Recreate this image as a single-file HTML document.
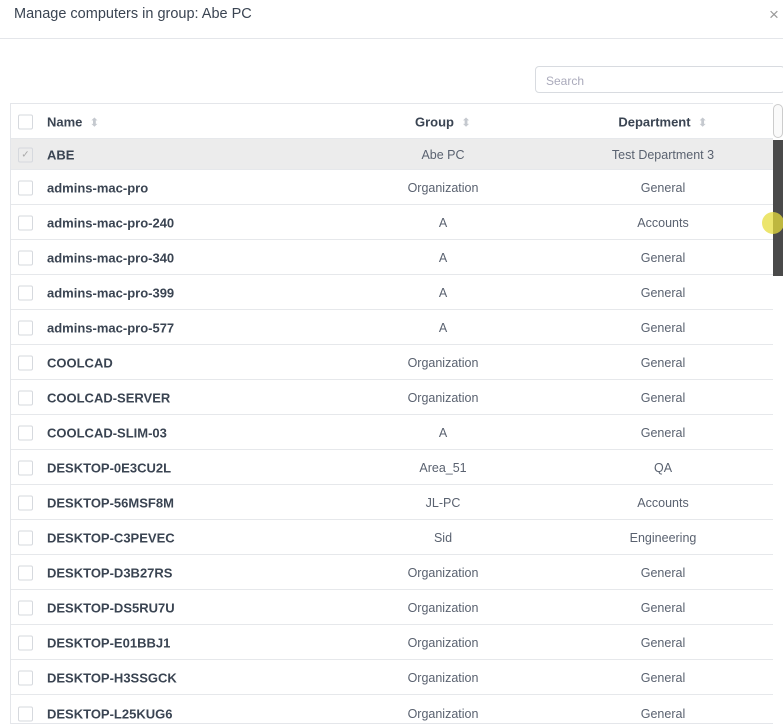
<!DOCTYPE html>
<html><head><meta charset="utf-8"><style>
body{margin:0;width:783px;height:728px;overflow:hidden;background:#fff;font-family:"Liberation Sans",sans-serif;color:#3a4452;position:relative}
.title{position:absolute;left:14px;top:6px;font-size:14.5px;color:#3a4452}
.x{position:absolute;left:769px;top:5px;font-size:17px;color:#999}
.hr{position:absolute;left:0;top:38px;width:783px;height:1px;background:#e4e6ea}
.search{position:absolute;left:535px;top:66px;width:250px;height:27px;border:1px solid #d8dbe0;border-radius:4px;box-sizing:border-box;font-size:12px;color:#aab;padding:7px 10px}
.tbl{position:absolute;left:10px;top:103px;width:763px;height:621px;border:1px solid #e4e6ea;border-right:none;overflow:hidden;box-sizing:border-box}
.row{position:relative;height:35px;border-bottom:1px solid #e6e8eb;box-sizing:border-box;font-size:13px}
.row span{position:absolute;top:calc(50% + 1px);transform:translateY(-50%)}
.cb{left:7px;width:15px;height:15px;border:1px solid #d6d9de;border-radius:2px;box-sizing:border-box}
.n{left:36px;font-weight:bold;color:#3a4452}
.g{left:432px;transform:translate(-50%,-50%)!important;color:#5a6270;font-size:12.5px}
.d{left:652px;transform:translate(-50%,-50%)!important;color:#5a6270;font-size:12.5px}
.hd{font-weight:bold;font-size:13px}
.s{color:#c5c9cf;font-size:12px;margin-left:7px;font-weight:normal}
.sb1{position:absolute;left:773px;top:104px;width:10px;height:34px;border:1px solid #ccc;border-radius:5px;box-sizing:border-box;background:#fafafa}
.sb2{position:absolute;left:773px;top:140px;width:10px;height:136px;background:#4a4a4a}
.cur{position:absolute;left:762px;top:212px;width:22px;height:22px;border-radius:50%;background:rgba(230,220,60,.75)}
</style></head><body>
<div class="title">Manage computers in group: Abe PC</div>
<div class="x">×</div>
<div class="hr"></div>
<div class="search">Search</div>
<div class="tbl">
<div class="row" style="height:35px"><span class="cb"></span><span class="n hd">Name<b class="s">⬍</b></span><span class="g hd" style="color:#3a4452;font-size:13px">Group<b class="s">⬍</b></span><span class="d hd" style="color:#3a4452;font-size:13px">Department<b class="s">⬍</b></span></div>
<div class="row" style="height:31px;background:#ececec"><span class="cb" style="font-size:10px;color:#aaa;text-align:center;line-height:13px">✓</span><span class="n">ABE</span><span class="g">Abe PC</span><span class="d">Test Department 3</span></div>
<div class="row"><span class="cb"></span><span class="n">admins-mac-pro</span><span class="g">Organization</span><span class="d">General</span></div>
<div class="row"><span class="cb"></span><span class="n">admins-mac-pro-240</span><span class="g">A</span><span class="d">Accounts</span></div>
<div class="row"><span class="cb"></span><span class="n">admins-mac-pro-340</span><span class="g">A</span><span class="d">General</span></div>
<div class="row"><span class="cb"></span><span class="n">admins-mac-pro-399</span><span class="g">A</span><span class="d">General</span></div>
<div class="row"><span class="cb"></span><span class="n">admins-mac-pro-577</span><span class="g">A</span><span class="d">General</span></div>
<div class="row"><span class="cb"></span><span class="n">COOLCAD</span><span class="g">Organization</span><span class="d">General</span></div>
<div class="row"><span class="cb"></span><span class="n">COOLCAD-SERVER</span><span class="g">Organization</span><span class="d">General</span></div>
<div class="row"><span class="cb"></span><span class="n">COOLCAD-SLIM-03</span><span class="g">A</span><span class="d">General</span></div>
<div class="row"><span class="cb"></span><span class="n">DESKTOP-0E3CU2L</span><span class="g">Area_51</span><span class="d">QA</span></div>
<div class="row"><span class="cb"></span><span class="n">DESKTOP-56MSF8M</span><span class="g">JL-PC</span><span class="d">Accounts</span></div>
<div class="row"><span class="cb"></span><span class="n">DESKTOP-C3PEVEC</span><span class="g">Sid</span><span class="d">Engineering</span></div>
<div class="row"><span class="cb"></span><span class="n">DESKTOP-D3B27RS</span><span class="g">Organization</span><span class="d">General</span></div>
<div class="row"><span class="cb"></span><span class="n">DESKTOP-DS5RU7U</span><span class="g">Organization</span><span class="d">General</span></div>
<div class="row"><span class="cb"></span><span class="n">DESKTOP-E01BBJ1</span><span class="g">Organization</span><span class="d">General</span></div>
<div class="row"><span class="cb"></span><span class="n">DESKTOP-H3SSGCK</span><span class="g">Organization</span><span class="d">General</span></div>
<div class="row" style="border-bottom:none"><span class="cb"></span><span class="n">DESKTOP-L25KUG6</span><span class="g">Organization</span><span class="d">General</span></div>
</div>
<div style="position:absolute;left:10px;top:723px;width:763px;height:1px;background:#e4e6ea"></div>
<div class="sb1"></div>
<div class="sb2"></div>
<div class="cur"></div>
</body></html>
